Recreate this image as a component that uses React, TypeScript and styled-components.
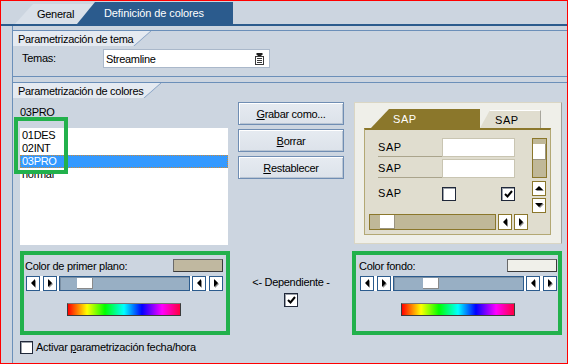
import React from 'react'
import styled, { createGlobalStyle } from 'styled-components'

const GlobalStyle = createGlobalStyle`
  html, body { margin: 0; padding: 0; }
  body {
    font-family: "Liberation Sans", Arial, sans-serif;
    font-size: 11px;
    color: #000;
  }
`

const Window = styled.div`
  width: 568px;
  height: 364px;
  box-sizing: border-box;
  border: 1px solid #ff0000;
  background: #ccd5e0;
  overflow: hidden;
  display: flex;
  flex-direction: column;
  letter-spacing: -0.3px;
`

const TabStrip = styled.div`
  height: 23px;
  display: flex;
  align-items: flex-end;
  padding-left: 14px;
  border-bottom: 2px solid #2b5b8d;
`

const Tab = styled.div<{ $active?: boolean }>`
  height: ${p => (p.$active ? 22 : 20)}px;
  width: ${p => (p.$active ? 156 : 80)}px;
  margin-left: ${p => (p.$active ? -18 : 0)}px;
  padding-left: ${p => (p.$active ? 27 : 22)}px;
  box-sizing: border-box;
  display: flex;
  align-items: center;
  letter-spacing: ${p => (p.$active ? '-0.1px' : '-0.3px')};
  background: ${p => (p.$active ? '#2b5b8d' : '#d9e0e9')};
  color: ${p => (p.$active ? '#fff' : '#000')};
  clip-path: polygon(18px 0, 100% 0, 100% 100%, 0 100%);
`

const Frame = styled.div`
  flex: 1;
  margin-left: 11px;
  padding-top: 4px;
  border-left: 1px solid #6b8fb9;
  display: flex;
  flex-direction: column;
`

const Group = styled.section<{ $grow?: boolean }>`
  border-top: 1px solid #6b8fb9;
  border-bottom: ${p => (p.$grow ? 'none' : '1px solid #6b8fb9')};
  margin-bottom: ${p => (p.$grow ? 0 : 5)}px;
  flex: ${p => (p.$grow ? 1 : 'none')};
  display: flex;
  flex-direction: column;
  align-items: flex-start;
`

const HeaderEdge = styled.div`
  height: 15px;
  padding-right: 1px;
  background: #7f9cc0;
  clip-path: polygon(0 0, 100% 0, calc(100% - 17px) 100%, 0 100%);
`

const HeaderFill = styled.div`
  height: 15px;
  box-sizing: border-box;
  padding: 0 17px 0 5px;
  display: flex;
  align-items: center;
  background: #e5eaf1;
  clip-path: polygon(0 0, 100% 0, calc(100% - 17px) 100%, 0 100%);
`

const ThemeRow = styled.div`
  height: 30px;
  box-sizing: border-box;
  padding: 3px 0 0 9px;
  display: flex;
  align-items: flex-start;
`

const FieldLabel = styled.span`
  width: 81px;
  line-height: 19px;
`

const Select = styled.div`
  width: 167px;
  height: 19px;
  box-sizing: border-box;
  border: 1px solid #aab8ca;
  background: #fff;
  padding: 0 5px 0 2px;
  display: flex;
  align-items: center;
  justify-content: space-between;
`

const ColorsBody = styled.div`
  align-self: stretch;
  display: grid;
  grid-template-columns: 210px 1fr 210px;
  grid-template-rows: 143px 90px auto;
  padding: 4px 5px 0 7px;
`

const LeftColumn = styled.div`
  position: relative;
  display: flex;
  flex-direction: column;
`

const CurrentName = styled.div`
  margin-top: 4px;
  line-height: 13px;
`

const ListBox = styled.div`
  margin-top: 9px;
  width: 208px;
  height: 117px;
  box-sizing: border-box;
  padding-top: 1px;
  background: #fff;
`

const ListItem = styled.div<{ $selected?: boolean }>`
  height: 13px;
  line-height: 13px;
  padding-left: 2px;
  box-sizing: border-box;
  background: ${p => (p.$selected ? '#3399ff' : 'transparent')};
  color: ${p => (p.$selected ? '#fff' : '#000')};
  outline: ${p => (p.$selected ? '1px dotted #c98a3c' : 'none')};
  outline-offset: -1px;
`

const Annotation = styled.div`
  position: absolute;
  left: -6px;
  top: 15px;
  width: 54px;
  height: 57px;
  box-sizing: border-box;
  border: 4px solid #22b14c;
`

const ButtonColumn = styled.div`
  display: flex;
  flex-direction: column;
  align-items: center;
  gap: 4px;
`

const Button = styled.button`
  width: 106px;
  height: 23px;
  margin: 0;
  padding: 0;
  font: inherit;
  letter-spacing: -0.3px;
  color: #000;
  background: linear-gradient(#e6ebf1, #dce2ea);
  border: 1px solid #6f8db3;
  box-shadow: inset 1px 1px 0 #fff, inset -1px -1px 0 #b9c5d3;
`

const Preview = styled.div`
  justify-self: end;
  width: 208px;
  height: 142px;
  box-sizing: border-box;
  background: #efefe9;
  border: 1px solid #dad6c4;
  border-right-color: #9e9e96;
  padding: 6px 0 0 9px;
`

const PTabRow = styled.div`
  height: 19px;
  padding-left: 7px;
  display: flex;
  align-items: flex-end;
`

const PTab = styled.div<{ $active?: boolean }>`
  width: ${p => (p.$active ? 109 : 61)}px;
  height: ${p => (p.$active ? 19 : 18)}px;
  box-sizing: border-box;
  padding-left: ${p => (p.$active ? 22 : 15)}px;
  display: flex;
  align-items: center;
  letter-spacing: 0.6px;
  background: ${p => (p.$active ? '#8b772b' : '#e0ddcf')};
  color: ${p => (p.$active ? '#fff' : '#000')};
  border-right: ${p => (p.$active ? 'none' : '1px solid #a8a69c')};
  border-top: ${p => (p.$active ? 'none' : '1px solid #fff')};
  clip-path: ${p =>
    p.$active
      ? 'polygon(18px 0, 100% 0, 100% 100%, 0 100%)'
      : 'polygon(10px 0, 100% 0, 100% 100%, 0 100%)'};
`

const PContent = styled.div`
  width: 187px;
  height: 107px;
  box-sizing: border-box;
  background: #e0ddcf;
  border: 1px solid #b3a874;
  border-top: 2px solid #8b772b;
  padding: 8px 3px 0 4px;
  display: grid;
  grid-template-columns: 159px 15px;
  grid-template-rows: 76px 16px;
  column-gap: 4px;
`

const PRows = styled.div`
  padding-left: 9px;
  display: flex;
  flex-direction: column;
`

const PRow = styled.div<{ $gap: number }>`
  margin-top: ${p => p.$gap}px;
  display: flex;
  align-items: center;
`

const PLabel = styled.span<{ $line?: boolean }>`
  width: 64px;
  height: 19px;
  line-height: 18px;
  box-sizing: border-box;
  letter-spacing: 0.6px;
  border-bottom: ${p => (p.$line ? '1px solid #aaa48c' : 'none')};
`

const PInput = styled.div`
  width: 73px;
  height: 19px;
  box-sizing: border-box;
  background: #fff;
  border: 1px solid #c9c5b2;
`

const PCheckSpacer = styled.div`
  width: 45px;
`

const VScroll = styled.div`
  display: flex;
  flex-direction: column;
`

const OliveTrack = styled.div<{ $vertical?: boolean }>`
  ${p => (p.$vertical ? 'height: 40px; padding-top: 5px;' : 'width: 127px; padding-left: 10px;')}
  box-sizing: border-box;
  background: #c0b898;
  border: 1px solid #8b772b;
  display: flex;
  align-items: ${p => (p.$vertical ? 'stretch' : 'center')};
  flex-direction: ${p => (p.$vertical ? 'column' : 'row')};
`

const OliveThumb = styled.div<{ $vertical?: boolean }>`
  ${p => (p.$vertical ? 'height: 16px;' : 'width: 15px; height: 14px;')}
  box-sizing: border-box;
  background: #fff;
  border-right: 1px solid #9a9480;
  border-bottom: 1px solid #9a9480;
`

const OliveButton = styled.div<{ $mt?: number }>`
  width: 14px;
  height: 15px;
  margin-top: ${p => p.$mt ?? 0}px;
  box-sizing: border-box;
  background: #fff;
  border: 1px solid #8b772b;
  display: flex;
  align-items: center;
  justify-content: center;
`

const HScroll = styled.div`
  display: flex;
  gap: 2px;
  height: 16px;
  & > ${OliveButton} {
    height: 16px;
  }
`

const MiddleColumn = styled.div`
  padding-top: 31px;
  display: flex;
  flex-direction: column;
  align-items: center;
  gap: 4px;
  line-height: 13px;
`

const CheckBox = styled.span<{ $size?: number }>`
  width: ${p => p.$size ?? 14}px;
  height: ${p => p.$size ?? 14}px;
  box-sizing: border-box;
  background: #fff;
  border: 1px solid #20283a;
  box-shadow: inset 1px 1px 0 #9aa0a8;
  display: inline-flex;
  align-items: center;
  justify-content: center;
  flex: none;
`

const ColorPanel = styled.div<{ $right?: boolean }>`
  margin-top: 6px;
  height: 84px;
  box-sizing: border-box;
  border: 4px solid #22b14c;
  padding: 4px ${p => (p.$right ? 1 : 3)}px 0 ${p => (p.$right ? 3 : 1)}px;
  display: flex;
  flex-direction: column;
`

const PanelHead = styled.div`
  height: 13px;
  display: flex;
  align-items: center;
  justify-content: space-between;
`

const Swatch = styled.div<{ $color: string }>`
  width: 50px;
  height: 13px;
  box-sizing: border-box;
  background: ${p => p.$color};
  border: 1px solid #3a3a3a;
  border-top-color: #6a6a6a;
  border-left-color: #6a6a6a;
`

const SlideStrip = styled.div`
  margin: 4px 0 0 1px;
  width: 197px;
  height: 15px;
  background: #fff;
  display: flex;
  gap: 3px;
`

const BlueButton = styled.div`
  width: 14px;
  height: 15px;
  box-sizing: border-box;
  background: #fff;
  border: 1px solid #2b5b8d;
  display: flex;
  align-items: center;
  justify-content: center;
  flex: none;
`

const BlueTrack = styled.div`
  flex: 1;
  margin: 0 -1px;
  box-sizing: border-box;
  background: #98afc4;
  border: 1px solid #2b5b8d;
  box-shadow: inset 1px 1px 0 #7b8fa3;
  display: flex;
  align-items: center;
`

const BlueThumb = styled.div`
  width: 16px;
  height: 11px;
  box-sizing: border-box;
  background: #fff;
  border-right: 1px solid #8a8a8a;
  border-bottom: 1px solid #8a8a8a;
`

const Rainbow = styled.div`
  align-self: center;
  margin-top: 12px;
  width: 114px;
  height: 13px;
  box-sizing: border-box;
  border: 1px solid #3b3b3b;
  border-top-color: #777;
  background: linear-gradient(
    to right,
    #ff0000 0%,
    #ffff00 17%,
    #00ff00 33%,
    #00ffff 50%,
    #0000ff 66%,
    #ff00ff 84%,
    #ff0040 100%
  );
`

const BottomRow = styled.div`
  grid-column: 1 / -1;
  padding-top: 6px;
  display: flex;
  align-items: center;
  gap: 3px;
  line-height: 13px;
`

const Arrow = ({ dir }: { dir: 'left' | 'right' | 'up' | 'down' }) => {
  const pts = {
    left: '5,0 5,8 1,4',
    right: '1,0 1,8 5,4',
    up: '0,5 8,5 4,1',
    down: '0,1 8,1 4,5',
  }[dir]
  const vertical = dir === 'up' || dir === 'down'
  return (
    <svg width={vertical ? 9 : 7} height={vertical ? 7 : 9} viewBox={vertical ? '0 0 9 7' : '0 0 7 9'}>
      <polygon points={pts} fill="#8c8c8c" transform="translate(1 1)" />
      <polygon points={pts} fill="#000" />
    </svg>
  )
}

const Check = () => (
  <svg width="9" height="8" viewBox="0 0 9 8">
    <polyline points="1,4 3.5,6.5 8,1" fill="none" stroke="#000" strokeWidth="2" />
  </svg>
)

// value-help glyph: dark tab on top of a lined sheet
const SheetIcon = () => (
  <svg width="9" height="12" viewBox="0 0 9 12">
    <path d="M1.5 0h6v1.5l-1.5 1.5h-3l-1.5-1.5z" fill="#1f1f1f" />
    <rect x="0.5" y="3.5" width="8" height="8" fill="#fff" stroke="#3a3a3a" />
    <path d="M2 5.5h5M2 7.5h5M2 9.5h5" stroke="#3a3a3a" />
  </svg>
)

const ColorSlider = ({ label, color, thumb, right }: { label: string; color: string; thumb: number; right?: boolean }) => (
  <ColorPanel $right={right}>
    <PanelHead>
      <span>{label}</span>
      <Swatch $color={color} />
    </PanelHead>
    <SlideStrip>
      <BlueButton><Arrow dir="left" /></BlueButton>
      <BlueButton><Arrow dir="right" /></BlueButton>
      <BlueTrack>
        <BlueThumb style={{ marginLeft: thumb }} />
      </BlueTrack>
      <BlueButton><Arrow dir="left" /></BlueButton>
      <BlueButton><Arrow dir="right" /></BlueButton>
    </SlideStrip>
    <Rainbow />
  </ColorPanel>
)

const themes = ['01DES', '02INT', '03PRO', 'normal']

export default function App() {
  const selected = '03PRO'
  return (
    <>
      <GlobalStyle />
      <Window>
        <TabStrip>
          <Tab>General</Tab>
          <Tab $active>Definición de colores</Tab>
        </TabStrip>

        <Frame>
          <Group>
            <HeaderEdge>
              <HeaderFill>Parametrización de tema</HeaderFill>
            </HeaderEdge>
            <ThemeRow>
              <FieldLabel>Temas:</FieldLabel>
              <Select>
                <span>Streamline</span>
                <SheetIcon />
              </Select>
            </ThemeRow>
          </Group>

          <Group $grow>
            <HeaderEdge>
              <HeaderFill>Parametrización de colores</HeaderFill>
            </HeaderEdge>
            <ColorsBody>
              <LeftColumn>
                <CurrentName>{selected}</CurrentName>
                <ListBox>
                  {themes.map(t => (
                    <ListItem key={t} $selected={t === selected}>{t}</ListItem>
                  ))}
                </ListBox>
                <Annotation />
              </LeftColumn>

              <ButtonColumn>
                <Button><u>G</u>rabar como...</Button>
                <Button><u>B</u>orrar</Button>
                <Button><u>R</u>establecer</Button>
              </ButtonColumn>

              <Preview>
                <PTabRow>
                  <PTab $active>SAP</PTab>
                  <PTab>SAP</PTab>
                </PTabRow>
                <PContent>
                  <PRows>
                    <PRow $gap={0}>
                      <PLabel $line>SAP</PLabel>
                      <PInput />
                    </PRow>
                    <PRow $gap={2}>
                      <PLabel $line>SAP</PLabel>
                      <PInput />
                    </PRow>
                    <PRow $gap={6}>
                      <PLabel>SAP</PLabel>
                      <CheckBox />
                      <PCheckSpacer />
                      <CheckBox><Check /></CheckBox>
                    </PRow>
                  </PRows>
                  <VScroll>
                    <OliveTrack $vertical>
                      <OliveThumb $vertical />
                    </OliveTrack>
                    <OliveButton $mt={3}><Arrow dir="up" /></OliveButton>
                    <OliveButton $mt={2}><Arrow dir="down" /></OliveButton>
                  </VScroll>
                  <HScroll>
                    <OliveTrack>
                      <OliveThumb />
                    </OliveTrack>
                    <OliveButton><Arrow dir="left" /></OliveButton>
                    <OliveButton><Arrow dir="right" /></OliveButton>
                  </HScroll>
                </PContent>
              </Preview>

              <ColorSlider label="Color de primer plano:" color="#c0b8a0" thumb={17} />

              <MiddleColumn>
                <span>&lt;- Dependiente -</span>
                <CheckBox><Check /></CheckBox>
              </MiddleColumn>

              <ColorSlider label="Color fondo:" color="#f0f0ea" thumb={29} right />

              <BottomRow>
                <CheckBox $size={13} />
                <span>Activar <u>p</u>arametrización fecha/hora</span>
              </BottomRow>
            </ColorsBody>
          </Group>
        </Frame>
      </Window>
    </>
  )
}
